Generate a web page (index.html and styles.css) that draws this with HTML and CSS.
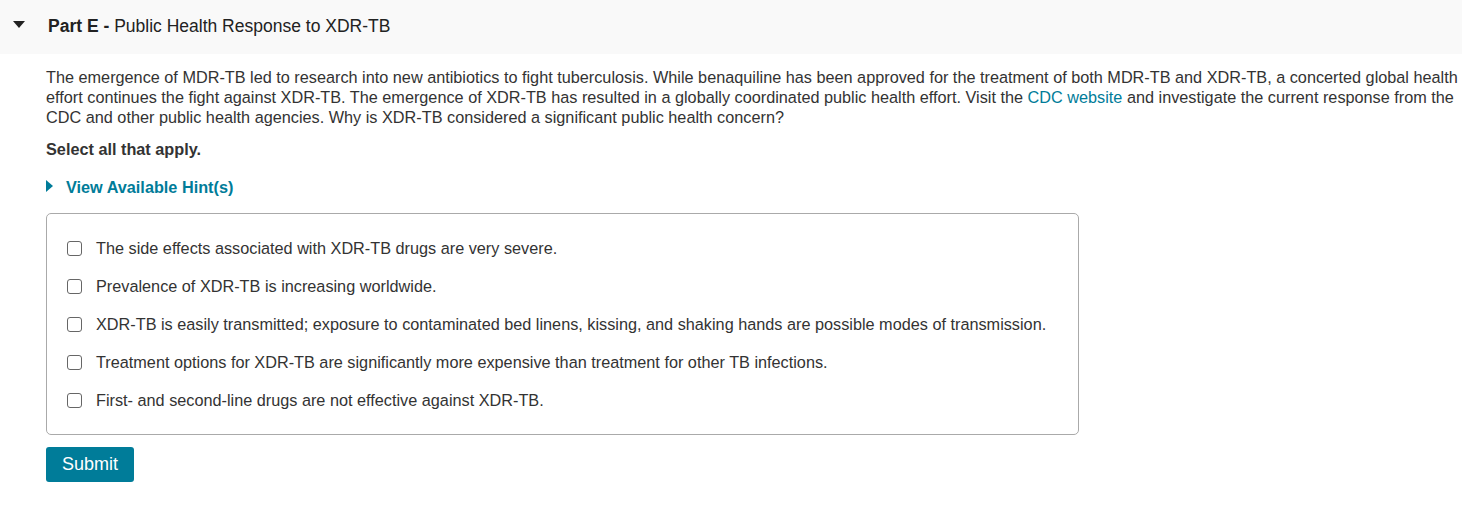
FILE: index.html
```html
<!DOCTYPE html>
<html>
<head>
<meta charset="utf-8">
<link rel="stylesheet" href="styles.css">
</head>
<body>
<div class="part-header">
  <span class="caret-col"><svg width="12" height="8" viewBox="0 0 12 8"><path d="M0 0 L12 0 L6 7 Z" fill="#222"/></svg></span>
  <span class="part-title"><b>Part E -</b> Public Health Response to XDR-TB</span>
</div>
<div class="part-body">
  <p class="prompt">The emergence of MDR-TB led to research into new antibiotics to fight tuberculosis. While benaquiline has been approved for the treatment of both MDR-TB and XDR-TB, a concerted global health effort continues the fight against XDR-TB. The emergence of XDR-TB has resulted in a globally coordinated public health effort. Visit the <a class="link" href="#">CDC website</a> and investigate the current response from the CDC and other public health agencies. Why is XDR-TB considered a significant public health concern?</p>
  <p class="instr">Select all that apply.</p>
  <div class="hint"><svg width="7" height="12" viewBox="0 0 7 12"><path d="M0 0 L7 6 L0 12 Z" fill="#007c99"/></svg><span>View Available Hint(s)</span></div>
  <div class="choices">
    <label class="choice"><span class="box"></span>The side effects associated with XDR-TB drugs are very severe.</label>
    <label class="choice"><span class="box"></span>Prevalence of XDR-TB is increasing worldwide.</label>
    <label class="choice"><span class="box"></span>XDR-TB is easily transmitted; exposure to contaminated bed linens, kissing, and shaking hands are possible modes of transmission.</label>
    <label class="choice"><span class="box"></span>Treatment options for XDR-TB are significantly more expensive than treatment for other TB infections.</label>
    <label class="choice"><span class="box"></span>First- and second-line drugs are not effective against XDR-TB.</label>
  </div>
  <button class="submit">Submit</button>
</div>
</body>
</html>
```
FILE: styles.css
```css
html, body { margin: 0; padding: 0; background: #fff; }
body { font-family: "Liberation Sans", Arial, sans-serif; color: #333; font-size: 16.25px; }
.part-header { height: 54px; background: #f9f9f9; display: flex; align-items: center; }
.caret-col { width: 48px; display: flex; justify-content: flex-start; padding-left: 13px; box-sizing: border-box; }
.caret-col svg { display: block; margin-top: -4px; }
.part-title { font-size: 17.5px; color: #222; margin-top: -1px; }
.part-title b { font-weight: bold; }
.part-body { padding: 13px 4px 0 46px; }
.prompt { margin: 0; line-height: 20px; }
.link { color: #007c99; text-decoration: none; }
.instr { margin: 12px 0 0; font-weight: bold; line-height: 20px; }
.hint { margin-top: 18px; display: flex; align-items: center; height: 20px; color: #007c99; font-weight: bold; }
.hint svg { display: block; margin-right: 13px; margin-top: -2px; }
.choices { margin-top: 16px; width: 1033px; box-sizing: border-box; border: 1px solid #aaa; border-radius: 5px; padding: 15px 0 15px 20px; }
.choice { display: flex; align-items: center; height: 38px; }
.box { border: 1px solid #666; border-radius: 3px; margin-right: 14px; box-sizing: border-box; width: 15px; height: 15px; }
.submit { margin-top: 12px; height: 35px; padding: 0 16px; background: #007c99; color: #fff; border: none; border-radius: 3px; font-family: "Liberation Sans", Arial, sans-serif; font-size: 18px; }
```
